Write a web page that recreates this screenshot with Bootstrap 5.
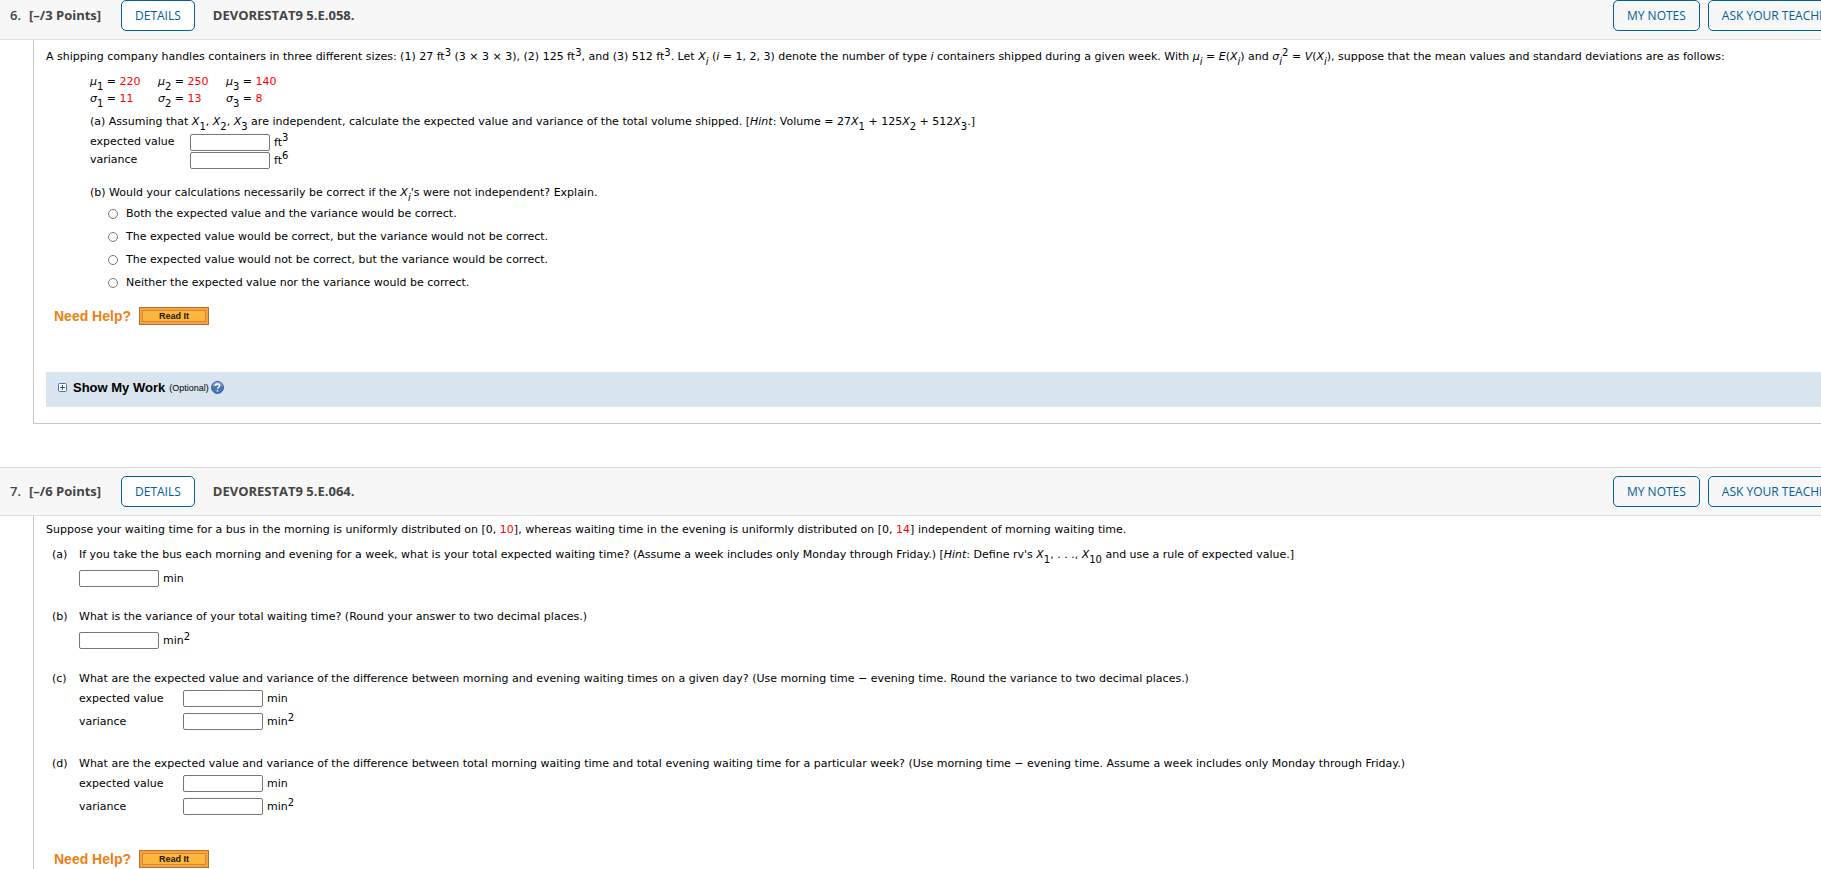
<!DOCTYPE html>
<html lang="en">
<head>
<meta charset="utf-8">
<meta name="viewport" content="width=device-width, initial-scale=1">
<title>Homework questions</title>
<link href="https://cdn.jsdelivr.net/npm/bootstrap@5.3.0/dist/css/bootstrap.min.css" rel="stylesheet">
<style>
body { font-family: Verdana, "DejaVu Sans", sans-serif; font-size: 11px; line-height: 16px; color: #000; background: #fff; overflow-x: hidden; }
.q-head { font-family: "Open Sans", sans-serif; font-size: 13px; line-height: 19px; color: #444; background: #f7f7f7; border-top: 1px solid #dedede; border-bottom: 1px solid #dedede; padding: 8px 0 8px 10px; }
.q-head.first { border-top: 0; padding-top: 0; }
.q-num { font-weight: 600; width: 19px; }
.q-points { font-weight: 700; width: 92px; }
.q-code { font-weight: 700; margin-left: 18px; }
.q-head .btn { --bs-btn-color: #00609c; --bs-btn-border-color: #00609c; --bs-btn-bg: #fff; --bs-btn-hover-bg: #00609c; --bs-btn-hover-color: #fff; font-size: 12px; line-height: 19px; padding: 5px 13px; border-radius: 5px; white-space: nowrap; flex: none; }
.q-actions { width: 208px; gap: 8px; overflow: hidden; }
.q-head .q-actions .btn { --bs-btn-bg: transparent; }
.q-panel { margin-left: 33px; padding: 9px 0 16px 12px; border-left: 1px solid #c8c8c8; border-bottom: 1px solid #c8c8c8; }
.q-panel.open { padding-top: 6px; border-bottom: 0; }
.q-next { margin-top: 43px; }
.q-text { white-space: nowrap; margin: 0; }
.q-indent { margin-left: 44px; }
sup, sub { font-size: 10px; line-height: 0; }
sup { top: -4px; vertical-align: baseline; }
sub { bottom: -5px; vertical-align: baseline; }
.rnd { color: #f00; }
.params { margin-top: 8px; margin-bottom: 7px; line-height: 17px; }
.params td { width: 68px; padding: 0; white-space: nowrap; }
.answers { margin-top: 3px; }
.answers td, .answers th { padding: 0; font-weight: 400; vertical-align: middle; }
.answers th { width: 100px; }
.answers td { height: 18px; }
.answers.roomy { margin-top: 0; }
.answers.single { margin-top: 4px; }
.answers.roomy th { width: 104px; }
.answers.roomy td, .answers.single td { height: 23px; }
.num-in { width: 80px; height: 17px; border: 1px solid #767676; border-radius: 2px; padding: 0 2px; background: #fff; margin-right: 4px; vertical-align: middle; }
.choices { padding: 1px 0 0 18px; }
.choices label { margin-left: 8px; }
.choices > div { height: 23px; }
.choices input { width: 10px; height: 10px; margin: 0; }
.need { color: #f08010; font: 700 14px/18px "Liberation Sans", Arial, sans-serif; width: 85px; }
.help-row { padding-left: 8px; margin-top: 13px; }
.q-panel.open .help-row { margin-top: 32px; }
.read-btn { width: 70px; height: 18px; padding: 0; border: 1px solid #b5712a; background: #fdb73e; box-shadow: inset 0 0 0 2px #f9a040, inset 0 0 0 3px #d08a35; font: 700 9px/14px "Liberation Sans", Arial, sans-serif; color: #1c1408; }
.work-bar { background: #d9e5ee; height: 35px; margin-top: 47px; padding: 0 0 4px 12px; font-family: "Liberation Sans", Arial, sans-serif; font-weight: 700; }
.work-bar a { color: #000; font-size: 13px; margin: 0 4px 0 6px; }
.work-opt { font-size: 9px; font-weight: 400; margin-right: 2px; }
.part { display: grid; grid-template-columns: 27px 1fr; margin: 9px 0 0 6px; }
.part + .part { margin-top: 19px; }
.part.pair + .part { margin-top: 23px; }
</style>
</head>
<body>
<main>
<section>
  <header class="q-head first d-flex align-items-center">
    <span class="q-num">6.</span><span class="q-points">[–/3 Points]</span>
    <button type="button" class="btn">DETAILS</button>
    <span class="q-code">DEVORESTAT9 5.E.058.</span>
    <div class="q-actions d-flex ms-auto"><button type="button" class="btn">MY NOTES</button><button type="button" class="btn">ASK YOUR TEACHER</button></div>
  </header>
  <div class="q-panel">
    <p class="q-text">A shipping company handles containers in three different sizes: (1) 27 ft<sup>3</sup> (3 × 3 × 3), (2) 125 ft<sup>3</sup>, and (3) 512 ft<sup>3</sup>. Let <i>X<sub>i</sub></i> (<i>i</i> = 1, 2, 3) denote the number of type <i>i</i> containers shipped during a given week. With <i>μ<sub>i</sub></i> = <i>E</i>(<i>X<sub>i</sub></i>) and <i>σ<sub>i</sub></i><sup>2</sup> = <i>V</i>(<i>X<sub>i</sub></i>), suppose that the mean values and standard deviations are as follows:</p>
    <div class="q-indent">
      <table class="params">
        <tr><td><i>μ</i><sub>1</sub> = <span class="rnd">220</span></td><td><i>μ</i><sub>2</sub> = <span class="rnd">250</span></td><td><i>μ</i><sub>3</sub> = <span class="rnd">140</span></td></tr>
        <tr><td><i>σ</i><sub>1</sub> = <span class="rnd">11</span></td><td><i>σ</i><sub>2</sub> = <span class="rnd">13</span></td><td><i>σ</i><sub>3</sub> = <span class="rnd">8</span></td></tr>
      </table>
      <p class="q-text">(a) Assuming that <i>X</i><sub>1</sub>, <i>X</i><sub>2</sub>, <i>X</i><sub>3</sub> are independent, calculate the expected value and variance of the total volume shipped. [<i>Hint</i>: Volume = 27<i>X</i><sub>1</sub> + 125<i>X</i><sub>2</sub> + 512<i>X</i><sub>3</sub>.]</p>
      <table class="answers">
        <tr><th><label for="q6e">expected value</label></th><td><input class="num-in" id="q6e" type="text">ft<sup>3</sup></td></tr>
        <tr><th><label for="q6v">variance</label></th><td><input class="num-in" id="q6v" type="text">ft<sup>6</sup></td></tr>
      </table>
      <p class="q-text mt-3">(b) Would your calculations necessarily be correct if the <i>X<sub>i</sub></i>'s were not independent? Explain.</p>
      <div class="choices">
        <div class="d-flex align-items-center"><input type="radio" name="q6" id="c1"><label for="c1">Both the expected value and the variance would be correct.</label></div>
        <div class="d-flex align-items-center"><input type="radio" name="q6" id="c2"><label for="c2">The expected value would be correct, but the variance would not be correct.</label></div>
        <div class="d-flex align-items-center"><input type="radio" name="q6" id="c3"><label for="c3">The expected value would not be correct, but the variance would be correct.</label></div>
        <div class="d-flex align-items-center"><input type="radio" name="q6" id="c4"><label for="c4">Neither the expected value nor the variance would be correct.</label></div>
      </div>
    </div>
    <div class="help-row d-flex align-items-center"><span class="need">Need Help?</span><button type="button" class="read-btn">Read It</button></div>
    <div class="work-bar d-flex align-items-center">
      <svg width="9" height="9" viewBox="0 0 9 9"><rect x=".5" y=".5" width="8" height="8" rx="1" fill="#fff" stroke="#4677a8"/><path d="M2 4.500h5M4.500 2v5" stroke="#24588f"/></svg>
      <a href="#" class="text-decoration-none">Show My Work</a><span class="work-opt">(Optional)</span>
      <svg width="13" height="13" viewBox="0 0 13 13"><circle cx="6.500" cy="6.500" r="6" fill="#4a74b8" stroke="#3a5f9c"/><path d="M1.500 5.500a5 4.500 0 0 1 10 0q-5-2-10 0" fill="#86a8d8"/><path d="M4.500 5q0-2 2-2t2 1.800q0 1-1 1.500t-1 1.500M6.500 9v1.500" fill="none" stroke="#fff" stroke-width="1.500"/></svg>
    </div>
  </div>
</section>
<section class="q-next">
  <header class="q-head d-flex align-items-center">
    <span class="q-num">7.</span><span class="q-points">[–/6 Points]</span>
    <button type="button" class="btn">DETAILS</button>
    <span class="q-code">DEVORESTAT9 5.E.064.</span>
    <div class="q-actions d-flex ms-auto"><button type="button" class="btn">MY NOTES</button><button type="button" class="btn">ASK YOUR TEACHER</button></div>
  </header>
  <div class="q-panel open">
    <p class="q-text">Suppose your waiting time for a bus in the morning is uniformly distributed on [0, <span class="rnd">10</span>], whereas waiting time in the evening is uniformly distributed on [0, <span class="rnd">14</span>] independent of morning waiting time.</p>
    <div class="part"><span>(a)</span><div>
      <p class="q-text"><label for="q7a">If you take the bus each morning and evening for a week, what is your total expected waiting time? (Assume a week includes only Monday through Friday.) [<i>Hint</i>: Define rv's <i>X</i><sub>1</sub>, . . ., <i>X</i><sub>10</sub> and use a rule of expected value.]</label></p>
      <table class="answers single"><tr><td><input class="num-in" id="q7a" type="text">min</td></tr></table>
    </div></div>
    <div class="part"><span>(b)</span><div>
      <p class="q-text"><label for="q7b">What is the variance of your total waiting time? (Round your answer to two decimal places.)</label></p>
      <table class="answers single"><tr><td><input class="num-in" id="q7b" type="text">min<sup>2</sup></td></tr></table>
    </div></div>
    <div class="part pair"><span>(c)</span><div>
      <p class="q-text">What are the expected value and variance of the difference between morning and evening waiting times on a given day? (Use morning time − evening time. Round the variance to two decimal places.)</p>
      <table class="answers roomy">
        <tr><th><label for="q7ce">expected value</label></th><td><input class="num-in" id="q7ce" type="text">min</td></tr>
        <tr><th><label for="q7cv">variance</label></th><td><input class="num-in" id="q7cv" type="text">min<sup>2</sup></td></tr>
      </table>
    </div></div>
    <div class="part pair"><span>(d)</span><div>
      <p class="q-text">What are the expected value and variance of the difference between total morning waiting time and total evening waiting time for a particular week? (Use morning time − evening time. Assume a week includes only Monday through Friday.)</p>
      <table class="answers roomy">
        <tr><th><label for="q7de">expected value</label></th><td><input class="num-in" id="q7de" type="text">min</td></tr>
        <tr><th><label for="q7dv">variance</label></th><td><input class="num-in" id="q7dv" type="text">min<sup>2</sup></td></tr>
      </table>
    </div></div>
    <div class="help-row d-flex align-items-center"><span class="need">Need Help?</span><button type="button" class="read-btn">Read It</button></div>
  </div>
</section>
</main>
<script src="https://cdn.jsdelivr.net/npm/bootstrap@5.3.0/dist/js/bootstrap.bundle.min.js"></script>
</body>
</html>
